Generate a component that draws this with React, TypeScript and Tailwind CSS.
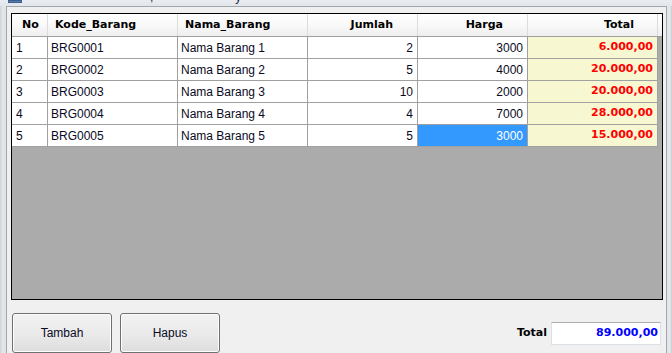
import React from "react";

const rows = [
  { no: "1", kode: "BRG0001", nama: "Nama Barang 1", jumlah: "2", harga: "3000", total: "6.000,00" },
  { no: "2", kode: "BRG0002", nama: "Nama Barang 2", jumlah: "5", harga: "4000", total: "20.000,00" },
  { no: "3", kode: "BRG0003", nama: "Nama Barang 3", jumlah: "10", harga: "2000", total: "20.000,00" },
  { no: "4", kode: "BRG0004", nama: "Nama Barang 4", jumlah: "4", harga: "7000", total: "28.000,00" },
  { no: "5", kode: "BRG0005", nama: "Nama Barang 5", jumlah: "5", harga: "3000", total: "15.000,00" },
];

const reg = { fontFamily: '"Liberation Sans", Arial, sans-serif' };
const bold = { fontFamily: '"DejaVu Sans", Verdana, sans-serif' };

export default function App() {
  return (
    <div className="w-[672px] h-[353px] overflow-hidden flex flex-col bg-[#f0f0f0]" style={reg}>
      {/* title bar remnant */}
      <div className="h-[6px] flex-none flex items-start bg-gradient-to-b from-[#e9edf1] to-[#e2e6ea] overflow-hidden">
        <div className="ml-[8px] w-[14px] h-[3px] bg-[#5d7fb0] border border-[#3d5f90]" />
        <div className="ml-[128px] -mt-[10px] text-[12px] leading-[14px] text-[#1e2b3a] whitespace-nowrap">
          <span>,</span>
          <span className="ml-[82px]">y</span>
        </div>
      </div>
      <div className="flex flex-1 min-h-0">
        {/* left frame */}
        <div className="w-[6px] flex-none bg-gradient-to-r from-[#cfd4d9] via-[#e4e8ec] to-[#dfe3e7]" />
        {/* client */}
        <div className="flex-1 border-l border-t border-r border-[#a3a8ae] flex flex-col pl-[4px] pr-[3px] pt-[6px]">
          {/* table */}
          <div className="h-[287px] flex-none border border-black bg-[#ababab] flex flex-col">
            {/* header */}
            <div className="h-[23px] flex-none flex bg-gradient-to-b from-[#ffffff] via-[#f9f9f9] to-[#eeeeee] border-b border-[#a0a0a0] text-[11px] font-bold text-black" style={bold}>
              <div className="w-[36px] border-r border-[#dcdcdc] pl-[10px] flex items-center">No</div>
              <div className="w-[130px] border-r border-[#dcdcdc] pl-[7px] flex items-center">Kode_Barang</div>
              <div className="w-[130px] border-r border-[#dcdcdc] pl-[7px] flex items-center">Nama_Barang</div>
              <div className="w-[110px] border-r border-[#dcdcdc] pr-[24px] flex items-center justify-end">Jumlah</div>
              <div className="w-[110px] border-r border-[#dcdcdc] pr-[24px] flex items-center justify-end">Harga</div>
              <div className="w-[130px] border-r border-[#dcdcdc] pr-[23px] flex items-center justify-end">Total</div>
              <div className="flex-1" />
            </div>
            {rows.map((r, i) => {
              const sel = i === 4;
              return (
                <div key={r.no} className="h-[22px] flex-none flex text-[12px] text-[#0a0a1e]">
                  <div className="w-[36px] bg-white border-r border-b border-[#a0a0a0] pl-[4px] flex items-center">{r.no}</div>
                  <div className="w-[130px] bg-white border-r border-b border-[#a0a0a0] pl-[3px] flex items-center">{r.kode}</div>
                  <div className="w-[130px] bg-white border-r border-b border-[#a0a0a0] pl-[3px] flex items-center">{r.nama}</div>
                  <div className="w-[110px] bg-white border-r border-b border-[#a0a0a0] pr-[4px] flex items-center justify-end">{r.jumlah}</div>
                  <div className={`w-[110px] border-r border-b border-[#a0a0a0] pr-[4px] flex items-center justify-end ${sel ? "bg-[#3399ff] text-white" : "bg-white"}`}>{r.harga}</div>
                  <div className="w-[130px] bg-[#f7f7d2] border-r border-b border-[#a0a0a0] pr-[4px] flex items-center justify-end text-[11px] font-bold text-[#ff0000]" style={bold}>{r.total}</div>
                </div>
              );
            })}
          </div>
          {/* bottom bar */}
          <div className="flex items-start justify-between mt-[13px]">
            <div className="flex gap-[8px] ml-[1px]">
              <button className="w-[100px] h-[40px] rounded-[3px] border border-[#707070] bg-gradient-to-b from-[#f2f2f2] via-[#ebebeb] to-[#dddddd] shadow-[inset_0_0_0_1px_#fcfcfc] text-[12px] text-[#0a0a1e]">Tambah</button>
              <button className="w-[100px] h-[40px] rounded-[3px] border border-[#707070] bg-gradient-to-b from-[#f2f2f2] via-[#ebebeb] to-[#dddddd] shadow-[inset_0_0_0_1px_#fcfcfc] text-[12px] text-[#0a0a1e]">Hapus</button>
            </div>
            <div className="flex items-center mt-[9px] mr-[2px]">
              <span className="text-[11px] font-bold text-black mr-[4px]" style={bold}>Total</span>
              <div className="w-[110px] h-[23px] bg-white border border-[#dbdfe6] border-t-[#abadb3] flex items-center justify-end pr-[2px] text-[11px] font-bold text-[#0000ff]" style={bold}>89.000,00</div>
            </div>
          </div>
        </div>
        {/* right frame */}
        <div className="w-[5px] flex-none bg-gradient-to-r from-[#dfe3e7] via-[#e6eaee] to-[#c9ced4]" />
      </div>
    </div>
  );
}
